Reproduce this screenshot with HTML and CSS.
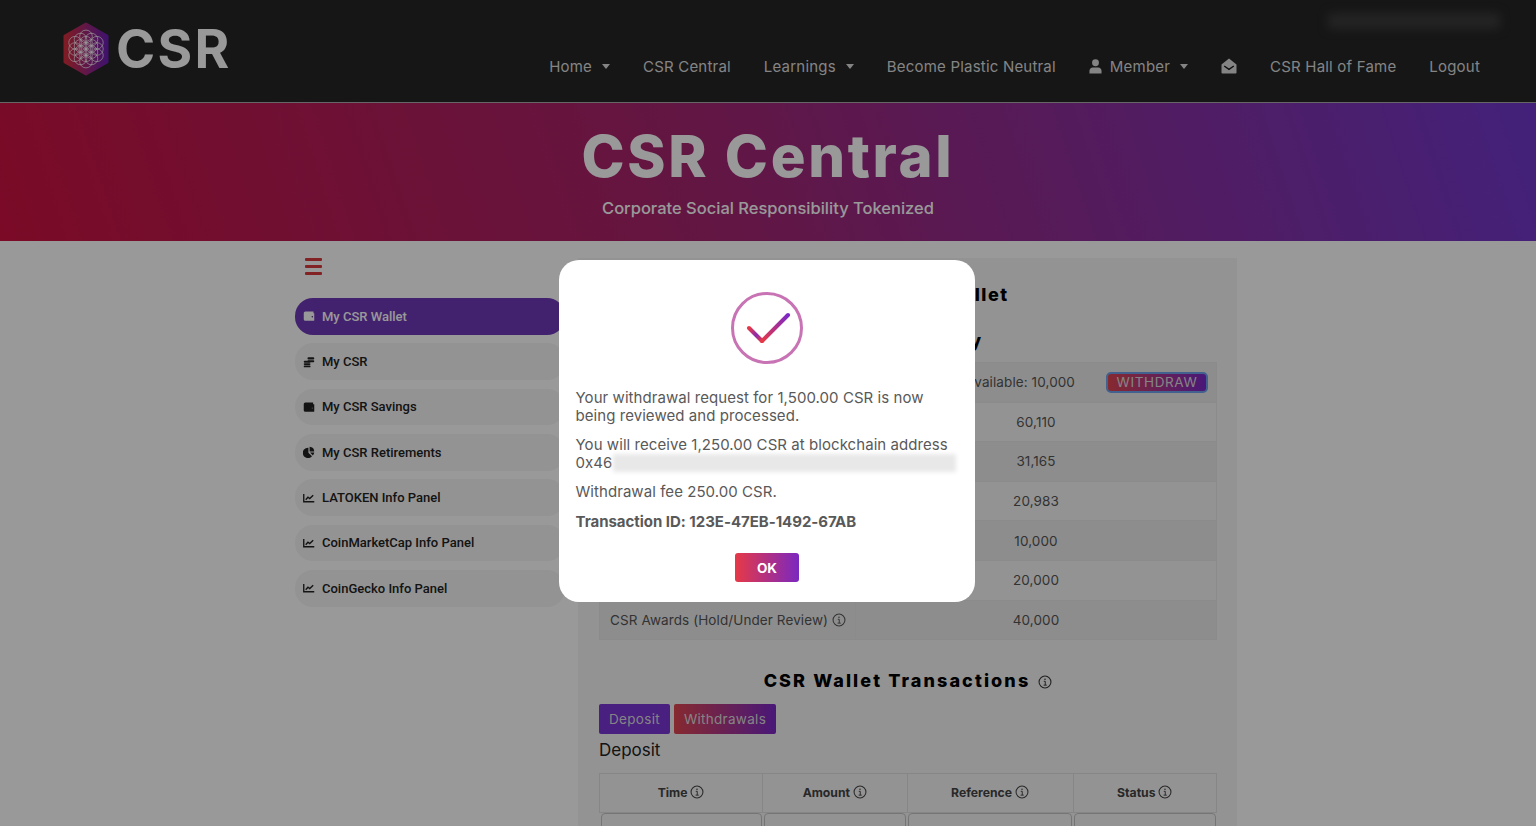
FILE: index.html
```html
<!DOCTYPE html>
<html lang="en">
<head>
    <meta charset="UTF-8">
    <meta name="viewport" content="width=device-width, initial-scale=1.0">
    <title>CSR Central</title>
    <link rel="stylesheet" href="styles.css">
</head>
<body>
    <svg class="icon-defs" width="0" height="0">
        <defs>
            <symbol id="i-info" viewBox="0 0 16 16">
                <circle cx="8" cy="8" r="6.8" fill="none" stroke="currentColor" stroke-width="1.2"/>
                <path d="M6.6 7.2H8.3V11.4M6.4 11.6H10" fill="none" stroke="currentColor" stroke-width="1.1"/>
                <circle cx="8" cy="4.9" r="0.9" fill="currentColor"/>
            </symbol>
            <symbol id="i-chart" viewBox="0 0 16 16">
                <path d="M1 2.5V13H15" fill="none" stroke="currentColor" stroke-width="1.8"/>
                <path d="M3.6 10.2L6.6 7L9 8.8L13.6 4.4" fill="none" stroke="currentColor" stroke-width="1.9"/>
            </symbol>
        </defs>
    </svg>

    <header class="navbar">
        <a class="brand" href="#">
            <svg class="brand-mark" viewBox="0 0 48 54">
                <defs>
                    <linearGradient id="hexFill" x1="0" y1="0" x2="1" y2="0">
                        <stop offset="0" stop-color="#d42e3c"/>
                        <stop offset="1" stop-color="#6c1fb4"/>
                    </linearGradient>
                </defs>
                <path d="M24 2L45 14V40L24 52L3 40V14Z" fill="url(#hexFill)" stroke="url(#hexFill)" stroke-width="3" stroke-linejoin="round"/>
                <g transform="translate(24 27)" fill="none" stroke="#fff" stroke-width="0.7">
                    <circle r="6.3"/>
                    <circle cy="-6.3" r="6.3"/><circle cy="6.3" r="6.3"/>
                    <circle cx="5.46" cy="-3.15" r="6.3"/><circle cx="5.46" cy="3.15" r="6.3"/>
                    <circle cx="-5.46" cy="-3.15" r="6.3"/><circle cx="-5.46" cy="3.15" r="6.3"/>
                    <circle cy="-12.6" r="6.3"/><circle cy="12.6" r="6.3"/>
                    <circle cx="10.91" cy="-6.3" r="6.3"/><circle cx="10.91" cy="6.3" r="6.3"/>
                    <circle cx="-10.91" cy="-6.3" r="6.3"/><circle cx="-10.91" cy="6.3" r="6.3"/>
                    <circle cx="5.46" cy="-9.45" r="6.3"/><circle cx="5.46" cy="9.45" r="6.3"/>
                    <circle cx="-5.46" cy="-9.45" r="6.3"/><circle cx="-5.46" cy="9.45" r="6.3"/>
                    <circle cx="10.91" r="6.3"/><circle cx="-10.91" r="6.3"/>
                </g>
            </svg>
            <span class="brand-name">CSR</span>
        </a>
        <div class="nav-side">
            <div class="user-email"></div>
            <nav class="nav-menu">
                <a href="#">Home <i class="caret"></i></a>
                <a href="#">CSR Central</a>
                <a href="#">Learnings <i class="caret"></i></a>
                <a href="#">Become Plastic Neutral</a>
                <a href="#">
                    <svg class="nav-icon" viewBox="0 0 14 16"><circle cx="7" cy="4" r="3.7" fill="currentColor"/><path d="M0.5 15.5V12.6C0.5 10.4 2.2 9 4 9H10C11.8 9 13.5 10.4 13.5 12.6V15.5Z" fill="currentColor"/></svg>
                    Member <i class="caret"></i>
                </a>
                <a href="#" aria-label="Messages">
                    <svg class="nav-icon mail" viewBox="0 0 16 16"><path d="M0.5 6.4L8 0.6L15.5 6.4V14.4C15.5 15 15 15.5 14.4 15.5H1.6C1 15.5 0.5 15 0.5 14.4Z" fill="currentColor"/><path d="M3.2 8L8 11.4L12.8 8" fill="none" stroke="#161616" stroke-width="1.3"/></svg>
                </a>
                <a href="#">CSR Hall of Fame</a>
                <a href="#">Logout</a>
            </nav>
        </div>
    </header>

    <section class="hero">
        <h1>CSR Central</h1>
        <p>Corporate Social Responsibility Tokenized</p>
    </section>

    <div class="page">
        <aside class="sidebar">
            <button class="menu-toggle" aria-label="Menu"><span></span><span></span><span></span></button>
            <ul class="side-menu">
                <li class="active">
                    <svg viewBox="0 0 16 16"><path d="M1 4.2C1 3 2 2 3.2 2H14V4.4H15V13.5C15 14 14.6 14.4 14 14.4H3C1.9 14.4 1 13.5 1 12.4Z" fill="currentColor"/><circle cx="12.4" cy="9" r="1" fill="#43226e"/></svg>
                    My CSR Wallet
                </li>
                <li>
                    <svg viewBox="0 0 16 16"><g fill="currentColor"><rect x="6" y="1.5" width="9" height="3.2" rx="1.4"/><rect x="6" y="5.6" width="9" height="2.6" rx="1.2"/><rect x="1" y="6.2" width="9" height="2.8" rx="1.3"/><rect x="1" y="9.6" width="9" height="2.4" rx="1.2"/><rect x="1" y="12.5" width="9" height="2.6" rx="1.2"/></g></svg>
                    My CSR
                </li>
                <li>
                    <svg viewBox="0 0 16 16"><path d="M1 4.2C1 3 2 2 3.2 2H13.5V4.4H15V13.5C15 14 14.6 14.4 14 14.4H3C1.9 14.4 1 13.5 1 12.4Z" fill="currentColor"/><circle cx="12.4" cy="9.4" r="0.9" fill="#939393"/></svg>
                    My CSR Savings
                </li>
                <li>
                    <svg viewBox="0 0 16 16"><path d="M7.2 2.2V9L12 13.8A7 7 0 1 1 7.2 2.2Z" fill="currentColor"/><path d="M8.8 1A6.6 6.6 0 0 1 15 7.2H8.8Z" fill="currentColor"/><path d="M9.4 8.8H15A7 7 0 0 1 13.2 12.6Z" fill="currentColor"/></svg>
                    My CSR Retirements
                </li>
                <li><svg><use href="#i-chart"/></svg>LATOKEN Info Panel</li>
                <li><svg><use href="#i-chart"/></svg>CoinMarketCap Info Panel</li>
                <li><svg><use href="#i-chart"/></svg>CoinGecko Info Panel</li>
            </ul>
        </aside>

        <main class="content">
            <h2 class="wallet-title">Member CSR Wallet</h2>
            <h3 class="summary-title">CSR Summary</h3>
            <!-- labels of the upper rows sit behind the modal -->
            <table class="summary-table">
                <tr>
                    <td class="label"></td>
                    <td class="balance-cell"><div class="balance-row"><span>Available: 10,000</span><button class="withdraw-btn">WITHDRAW</button></div></td>
                </tr>
                <tr><td class="label"></td><td>60,110</td></tr>
                <tr><td class="label"></td><td>31,165</td></tr>
                <tr><td class="label"></td><td>20,983</td></tr>
                <tr><td class="label"></td><td>10,000</td></tr>
                <tr><td class="label"></td><td>20,000</td></tr>
                <tr><td class="label">CSR Awards (Hold/Under Review) <svg class="info"><use href="#i-info"/></svg></td><td>40,000</td></tr>
            </table>

            <h3 class="transactions-title">CSR Wallet Transactions <svg class="info"><use href="#i-info"/></svg></h3>
            <div class="tab-row">
                <button class="tab tab-deposit">Deposit</button>
                <button class="tab tab-withdrawals">Withdrawals</button>
            </div>
            <h4 class="tab-heading">Deposit</h4>
            <table class="tx-table">
                <tr>
                    <th class="col-time">Time <svg class="info"><use href="#i-info"/></svg></th>
                    <th class="col-amount">Amount <svg class="info"><use href="#i-info"/></svg></th>
                    <th class="col-ref">Reference <svg class="info"><use href="#i-info"/></svg></th>
                    <th>Status <svg class="info"><use href="#i-info"/></svg></th>
                </tr>
                <tr class="filter-row">
                    <td><div class="filter-box"></div></td>
                    <td><div class="filter-box"></div></td>
                    <td><div class="filter-box"></div></td>
                    <td><div class="filter-box"></div></td>
                </tr>
            </table>
        </main>
    </div>

    <div class="overlay"></div>

    <div class="modal">
        <svg class="success-icon" viewBox="0 0 72 72">
            <defs>
                <linearGradient id="armShort" gradientUnits="userSpaceOnUse" x1="18" y1="36" x2="31" y2="49">
                    <stop offset="0" stop-color="#e63946"/>
                    <stop offset="0.55" stop-color="#8a2bb0"/>
                    <stop offset="1" stop-color="#e63946"/>
                </linearGradient>
                <linearGradient id="armLong" gradientUnits="userSpaceOnUse" x1="31" y1="49" x2="57" y2="23">
                    <stop offset="0" stop-color="#e63946"/>
                    <stop offset="1" stop-color="#7b28c8"/>
                </linearGradient>
            </defs>
            <circle cx="36" cy="36" r="34.5" fill="none" stroke="#c873b4" stroke-width="3"/>
            <path d="M18 36L31 49" fill="none" stroke="url(#armShort)" stroke-width="4" stroke-linecap="round"/>
            <path d="M31 49L57 23" fill="none" stroke="url(#armLong)" stroke-width="4" stroke-linecap="round"/>
        </svg>
        <div class="modal-text">
            <p>Your withdrawal request for 1,500.00 CSR is now being reviewed and processed.</p>
            <p>You will receive 1,250.00 CSR at blockchain address<br>0x46<span class="blurred-address"></span></p>
            <p>Withdrawal fee 250.00 CSR.</p>
            <p class="tx-id">Transaction ID: 123E-47EB-1492-67AB</p>
        </div>
        <button class="ok-btn">OK</button>
    </div>
</body>
</html>
```

FILE: styles.css
```css
/* Global Styles */
html, body {
    height: 100%;
}

body {
    margin: 0;
    overflow: hidden;
    background-color: #fff;
    font-family: 'Inter', 'Liberation Sans', sans-serif;
    color: #555;
}

a {
    color: inherit;
    text-decoration: none;
}

.icon-defs {
    position: absolute;
}

/* Navbar */
.navbar {
    display: flex;
    justify-content: space-between;
    height: 102px;
    padding: 0 56px 0 62px;
    background-color: #252525;
    border-bottom: 1px solid #aaa;
}

.brand {
    display: flex;
    align-items: flex-start;
    gap: 6px;
    padding-top: 22px;
    color: #fff;
}

.brand-mark {
    width: 48px;
    height: 54px;
}

.brand-name {
    font-size: 53px;
    font-weight: 700;
    line-height: 54px;
    letter-spacing: 2.3px;
}

.nav-side {
    display: flex;
    flex-direction: column;
    align-items: flex-end;
}

.user-email {
    margin: 13px -20px 0 0;
    width: 172px;
    height: 16px;
    background-color: #3c3c3c;
    filter: blur(5px);
}

.nav-menu {
    display: flex;
    align-items: center;
    gap: 33px;
    margin-top: 26px;
    color: #ddd;
    font-size: 15px;
    letter-spacing: 0.2px;
}

.nav-menu a {
    display: flex;
    align-items: center;
    gap: 8px;
    height: 22px;
}

.caret {
    display: inline-block;
    margin-left: 2px;
    border-top: 5px solid currentColor;
    border-left: 4.5px solid transparent;
    border-right: 4.5px solid transparent;
}

.nav-icon {
    width: 13px;
    height: 15px;
}

.nav-icon.mail {
    width: 16px;
    height: 16px;
}

/* Hero */
.hero {
    height: 138px;
    box-sizing: border-box;
    padding-top: 20px;
    text-align: center;
    color: #fff;
    background: linear-gradient(72deg, #cc1240 0%, #a5256f 45%, #7038cc 100%);
}

.hero h1 {
    margin: 0;
    font-size: 58px;
    font-weight: 800;
    line-height: 66px;
    letter-spacing: 2.7px;
}

.hero p {
    margin: 7px 0 0;
    font-size: 16.5px;
    font-weight: 500;
    line-height: 24px;
}

/* Page */
.page {
    display: flex;
    width: 942px;
    margin: 0 auto 0 295px;
}

/* Sidebar */
.sidebar {
    width: 283px;
    padding-top: 17px;
    flex-shrink: 0;
}

.menu-toggle {
    display: flex;
    flex-direction: column;
    gap: 4px;
    margin: 0 0 23px 10px;
    padding: 0;
    width: 17px;
    border: none;
    background: none;
}

.menu-toggle span {
    height: 3px;
    width: 17px;
    border-radius: 1px;
    background-color: #d93a3f;
}

.side-menu {
    margin: 0;
    padding: 0;
    width: 270px;
    list-style: none;
}

.side-menu li {
    display: flex;
    align-items: center;
    gap: 7px;
    height: 36.5px;
    margin-bottom: 8.85px;
    padding-left: 8px;
    box-sizing: border-box;
    border-radius: 18px;
    background-color: #f5f5f5;
    color: #222;
    font-family: 'Roboto', 'Liberation Sans', sans-serif;
    font-size: 13px;
    font-weight: 500;
}

.side-menu li svg {
    width: 12px;
    height: 12px;
    flex-shrink: 0;
}

.side-menu li.active {
    background-color: #6f37b8;
    color: #fff;
}

/* Content */
.content {
    flex: 1;
    margin-top: 17px;
    padding: 0 20px 0 21px;
    height: 600px;
    background-color: #f5f5f5;
}

.wallet-title,
.summary-title,
.transactions-title {
    text-align: center;
    color: #000;
    font-size: 18px;
    font-weight: 800;
    line-height: 24px;
    letter-spacing: 2.1px;
}

.wallet-title {
    margin: 0;
    padding-top: 25px;
    letter-spacing: 1.5px;
}

.summary-title {
    margin: 22px 0 0;
}

.summary-table,
.tx-table {
    width: 618px;
    table-layout: fixed;
    border-collapse: collapse;
    font-size: 13.5px;
}

.summary-table {
    margin-top: 9px;
}

.summary-table td {
    height: 39.6px;
    padding: 0 10px;
    box-sizing: border-box;
    border: 1px solid #e8e8e8;
    text-align: center;
    letter-spacing: 0.1px;
}

.summary-table td.label {
    width: 256px;
    text-align: left;
    white-space: nowrap;
}

.summary-table tr:nth-child(odd) {
    background-color: #ececec;
}

.summary-table .balance-cell {
    padding: 0 8px 0 0;
}

.balance-row {
    display: flex;
    justify-content: flex-end;
    align-items: center;
    gap: 31px;
}

.withdraw-btn {
    width: 102px;
    height: 21px;
    padding: 0;
    border: 2px solid #6ea2ee;
    border-radius: 5px;
    color: #ddd;
    font-family: inherit;
    font-size: 13.5px;
    letter-spacing: 0.6px;
    background: linear-gradient(to right, #e04650, #7b28c8);
}

.info {
    width: 14px;
    height: 14px;
    vertical-align: -2px;
}

.transactions-title {
    margin: 29px 0 0;
}

.transactions-title .info {
    margin-left: 2px;
    color: #333;
}

.tab-row {
    display: flex;
    gap: 4px;
    margin-top: 11px;
}

.tab {
    height: 30px;
    padding: 0;
    border: none;
    border-radius: 2px;
    color: #ddd;
    font-family: inherit;
    font-size: 13.5px;
    letter-spacing: 0.3px;
}

.tab-deposit {
    width: 71px;
    background-color: #7b35d5;
}

.tab-withdrawals {
    width: 102px;
    background: linear-gradient(to right, #e04650, #7b28c8);
}

.tab-heading {
    margin: 5px 0 0;
    color: #222;
    font-size: 17px;
    font-weight: 400;
    line-height: 22px;
}

.tx-table {
    margin-top: 12px;
}

.tx-table th {
    height: 37px;
    padding: 0 0 1px;
    border: 1px solid #e0e0e0;
    font-size: 12.2px;
    font-weight: 700;
    color: #444;
}

.col-time {
    width: 162px;
}

.col-amount {
    width: 143.5px;
}

.col-ref {
    width: 165px;
}

.filter-row td {
    padding: 0 1px;
}

.filter-box {
    height: 40px;
    box-sizing: border-box;
    border: 1px solid #c4c4c4;
    border-radius: 4px 4px 0 0;
}

/* Modal */
.overlay {
    position: fixed;
    inset: 0;
    background-color: rgba(0, 0, 0, 0.4);
}

.modal {
    position: fixed;
    top: 260px;
    left: 559px;
    width: 416px;
    height: 342px;
    box-sizing: border-box;
    padding: 32px 16.5px 0;
    display: flex;
    flex-direction: column;
    align-items: center;
    border-radius: 20px;
    background-color: #fff;
    color: #595959;
}

.success-icon {
    width: 72px;
    height: 72px;
    flex-shrink: 0;
}

.modal-text {
    align-self: stretch;
    margin-top: 25px;
    font-size: 15px;
    line-height: 18px;
    letter-spacing: 0.06px;
}

.modal-text p {
    margin: 0 0 11px;
}

.modal-text .tx-id {
    margin-top: 12px;
    font-weight: 700;
    letter-spacing: -0.03px;
}

.blurred-address {
    display: inline-block;
    width: 343px;
    height: 18px;
    margin-left: 1px;
    vertical-align: top;
    background-color: #e8e8e8;
    filter: blur(2px);
}

.ok-btn {
    width: 64px;
    height: 29px;
    margin-top: 11px;
    padding: 0;
    border: none;
    border-radius: 3px;
    color: #fff;
    font-family: inherit;
    font-size: 13.5px;
    font-weight: 700;
    background: linear-gradient(to right, #e63946, #7b28c0);
}
```
